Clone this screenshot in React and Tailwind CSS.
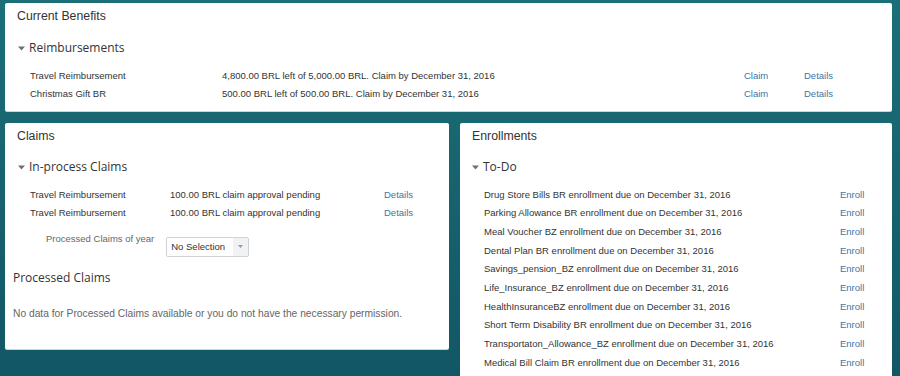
const body = "font-['Liberation_Sans',Arial,sans-serif]";
const title = "font-['Liberation_Sans',Arial,sans-serif] text-[12.3px] text-[#333]";
const link = "text-[#3b76a8]";

function Caret() {
  return (
    <svg width="7" height="5" viewBox="0 0 7 5" className="mr-[4px] shrink-0">
      <path d="M0 0.5h7L3.5 4.6z" fill="#707070" />
    </svg>
  );
}

function SectionHeader({ label, className = "" }) {
  return (
    <div
      className={`flex h-[20px] items-center pl-[13px] font-['Open_Sans',sans-serif] text-[12px] text-[#333] ${className}`}
    >
      <Caret />
      {label}
    </div>
  );
}

const benefits = [
  ["Travel Reimbursement", "4,800.00 BRL left of 5,000.00 BRL. Claim by December 31, 2016"],
  ["Christmas Gift BR", "500.00 BRL left of 500.00 BRL. Claim by December 31, 2016"],
];

const enrollments = [
  "Drug Store Bills BR",
  "Parking Allowance BR",
  "Meal Voucher BZ",
  "Dental Plan BR",
  "Savings_pension_BZ",
  "Life_Insurance_BZ",
  "HealthInsuranceBZ",
  "Short Term Disability BR",
  "Transportaton_Allowance_BZ",
  "Medical Bill Claim BR",
];

export default function App() {
  return (
    <div className={`min-h-screen bg-gradient-to-b from-[#1b6f76] to-[#115565] pt-[3px] pl-[5px] pr-[8px] ${body}`}>
      {/* Current Benefits */}
      <div className="rounded-[2px] bg-white pt-[3px] pb-[7.5px] shadow-[0_1px_0_#c9d6da]">
        <div className={`flex h-[20px] items-center pl-[12px] ${title}`}>Current Benefits</div>
        <SectionHeader label="Reimbursements" className="mt-[12px]" />
        <div className="mt-[8.5px] pl-[25px] text-[9.5px] text-[#333]">
          {benefits.map(([name, value]) => (
            <div key={name} className="flex h-[18.7px] items-center">
              <span className="w-[192px]">{name}</span>
              <span className="w-[522px]">{value}</span>
              <span className={`w-[60px] ${link}`}>Claim</span>
              <span className={link}>Details</span>
            </div>
          ))}
        </div>
      </div>

      <div className="mt-[12px] flex items-start gap-[11px]">
        {/* Claims */}
        <div className="w-[444px] rounded-[2px] bg-white pt-[3px] pb-[29px] shadow-[0_1px_0_#c9d6da]">
          <div className={`flex h-[20px] items-center pl-[12px] ${title}`}>Claims</div>
          <SectionHeader label="In-process Claims" className="mt-[11px]" />
          <div className="mt-[8px] pl-[25px] text-[9.5px] text-[#333]">
            {[0, 1].map((i) => (
              <div key={i} className="flex h-[18.7px] items-center">
                <span className="w-[140px]">Travel Reimbursement</span>
                <span className="w-[214px]">100.00 BRL claim approval pending</span>
                <span className={link}>Details</span>
              </div>
            ))}
          </div>
          <div className="mt-[10px] flex items-start pl-[41px]">
            <span className="h-[12px] text-[9.5px] leading-[12px] text-[#666]">Processed Claims of year</span>
            <div className="ml-[12px] mt-[4px] flex h-[20px] w-[83px] overflow-hidden rounded-[2px] border border-[#cfd3d6] bg-white">
              <span className="flex flex-1 items-center pl-[4px] text-[9.5px] text-[#333]">No Selection</span>
              <span className="flex w-[15px] items-center justify-center bg-[#f1f2f3]">
                <svg width="5" height="3" viewBox="0 0 5 3">
                  <path d="M0 0h5L2.5 3z" fill="#9a9a9a" />
                </svg>
              </span>
            </div>
          </div>
          <div className="mt-[11px] flex h-[20px] items-center pl-[8px] font-['Open_Sans',sans-serif] text-[12px] text-[#333]">
            Processed Claims
          </div>
          <div className="mt-[20px] h-[12px] pl-[8px] text-[10.25px] leading-[12px] text-[#666]">
            No data for Processed Claims available or you do not have the necessary permission.
          </div>
        </div>

        {/* Enrollments */}
        <div className="flex-1 rounded-[2px] bg-white pt-[3px] pb-[30px]">
          <div className={`flex h-[20px] items-center pl-[12px] ${title}`}>Enrollments</div>
          <SectionHeader label="To-Do" className="mt-[11px] !pl-[12px]" />
          <div className="mt-[8px] pl-[24px] text-[9.5px] text-[#333]">
            {enrollments.map((name) => (
              <div key={name} className="flex h-[18.7px] items-center">
                <span className="w-[356px]">{name} enrollment due on December 31, 2016</span>
                <span className={link}>Enroll</span>
              </div>
            ))}
          </div>
        </div>
      </div>
    </div>
  );
}
